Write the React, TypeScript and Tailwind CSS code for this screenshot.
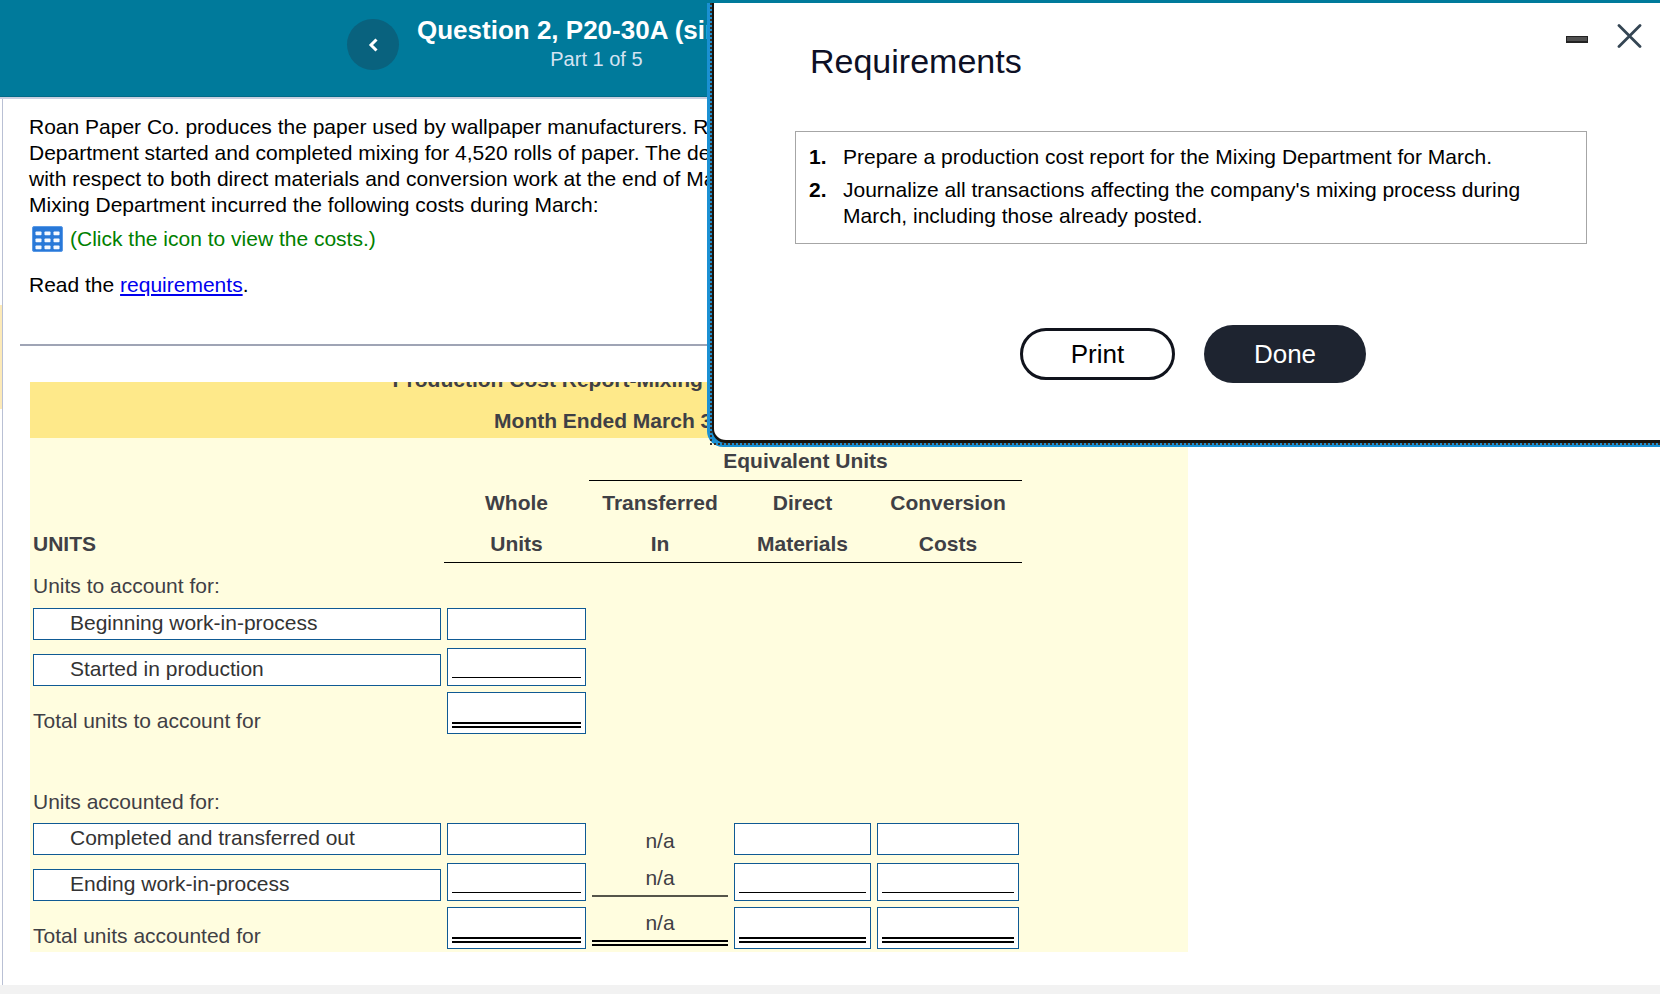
import { useState } from 'react';
import type { ReactNode } from 'react';

type LineStyle = 'none' | 'single' | 'double';

// Answer box, with the accounting rule lines drawn inside it
function AnswerBox({ label, line = 'none' }: { label: string; line?: LineStyle }) {
  const [value, setValue] = useState('');
  const height = line === 'double' ? 'h-[42px]' : line === 'single' ? 'h-[38px]' : 'h-8';

  return (
    <div className={`flex flex-col border border-[#0f5a94] bg-white px-[4px] ${height}`}>
      <input
        aria-label={label}
        value={value}
        onChange={(e) => setValue(e.target.value)}
        className="min-h-0 w-full flex-1 bg-transparent text-center outline-none"
      />
      {line === 'single' && <div className="mb-[7px] border-b border-black" />}
      {line === 'double' && <div className="mb-[5px] h-[6px] border-y-2 border-black" />}
    </div>
  );
}

// Row title the student picks
function AccountBox({ label, name }: { label: string; name: string }) {
  const [value, setValue] = useState(name);
  return (
    <input
      aria-label={label}
      value={value}
      onChange={(e) => setValue(e.target.value)}
      className="block h-8 w-full border border-[#0f5a94] bg-white pb-[2px] pl-[36px] text-[#333] outline-none"
    />
  );
}

function NotApplicable({ line = 'none' }: { line?: LineStyle }) {
  return (
    <div>
      <div className="pb-[4px] leading-[26px]">n/a</div>
      {line === 'single' && <div className="mb-[4px] border-b-2 border-[#55554a]" />}
      {line === 'double' && <div className="mb-[3px] h-[6px] border-y-2 border-black" />}
    </div>
  );
}

function HeadCell({ children }: { children: ReactNode }) {
  return <th className="h-[41px] pt-[5px] text-center">{children}</th>;
}

function UnitCell({ children }: { children: ReactNode }) {
  return <th className="border-b border-black pt-[5px] text-center">{children}</th>;
}

function CostReport() {
  return (
    <table className="-mt-[25px] w-full table-fixed border-collapse bg-[#fffddf] text-left text-[21px] leading-[26px] text-[#3f4045]">
      <colgroup>
        <col className="w-[414px]" />
        <col className="w-[145px]" />
        <col className="w-[142px]" />
        <col className="w-[143px]" />
        <col className="w-[148px]" />
        <col />
      </colgroup>
      <thead>
        <tr className="h-[41px] bg-[#fee98a]">
          <th colSpan={6} className="pt-[5px] text-center">Production Cost Report-Mixing Department</th>
        </tr>
        <tr className="h-10 bg-[#fee98a]">
          <th colSpan={6} className="pt-[5px] text-center">Month Ended March 31</th>
        </tr>
        <tr className="h-[42px]">
          <td colSpan={2} />
          <th colSpan={3} className="border-b border-black pt-[5px] text-center">Equivalent Units</th>
          <td />
        </tr>
        <tr>
          <td />
          <HeadCell>Whole</HeadCell>
          <HeadCell>Transferred</HeadCell>
          <HeadCell>Direct</HeadCell>
          <HeadCell>Conversion</HeadCell>
          <td />
        </tr>
        <tr className="h-[41px]">
          <th className="pl-[3px] pt-[5px]">UNITS</th>
          <UnitCell>Units</UnitCell>
          <UnitCell>In</UnitCell>
          <UnitCell>Materials</UnitCell>
          <UnitCell>Costs</UnitCell>
          <td />
        </tr>
      </thead>
      <tbody>
        <tr className="h-[43px]">
          <td className="pl-[3px] pt-[5px]">Units to account for:</td>
        </tr>
        <tr>
          <td className="p-[3px] align-bottom">
            <AccountBox label="First unit source" name="Beginning work-in-process" />
          </td>
          <td className="p-[3px]"><AnswerBox label="Beginning whole units" /></td>
        </tr>
        <tr className="h-[46px]">
          <td className="p-[3px] align-bottom">
            <AccountBox label="Second unit source" name="Started in production" />
          </td>
          <td className="p-[3px] align-bottom"><AnswerBox label="Started whole units" line="single" /></td>
        </tr>
        <tr>
          <td className="px-[3px] align-bottom leading-8">Total units to account for</td>
          <td className="p-[3px]"><AnswerBox label="Total whole units to account for" line="double" /></td>
        </tr>
        <tr className="h-[41px]">
          <td />
        </tr>
        <tr className="h-[42px]">
          <td className="pl-[3px] pt-[5px]">Units accounted for:</td>
        </tr>
        <tr>
          <td className="p-[3px]">
            <AccountBox label="First unit use" name="Completed and transferred out" />
          </td>
          <td className="p-[3px]"><AnswerBox label="Completed whole units" /></td>
          <td className="px-[3px] text-center align-bottom"><NotApplicable /></td>
          <td className="p-[3px]"><AnswerBox label="Completed direct materials" /></td>
          <td className="p-[3px]"><AnswerBox label="Completed conversion costs" /></td>
        </tr>
        <tr className="h-[46px]">
          <td className="p-[3px] align-bottom">
            <AccountBox label="Second unit use" name="Ending work-in-process" />
          </td>
          <td className="p-[3px] align-bottom"><AnswerBox label="Ending whole units" line="single" /></td>
          <td className="px-[3px] pb-[3px] text-center align-bottom"><NotApplicable line="single" /></td>
          <td className="p-[3px] align-bottom"><AnswerBox label="Ending direct materials" line="single" /></td>
          <td className="p-[3px] align-bottom"><AnswerBox label="Ending conversion costs" line="single" /></td>
        </tr>
        <tr>
          <td className="px-[3px] align-bottom leading-8">Total units accounted for</td>
          <td className="p-[3px]"><AnswerBox label="Total whole units" line="double" /></td>
          <td className="px-[3px] pb-[3px] text-center align-bottom"><NotApplicable line="double" /></td>
          <td className="p-[3px]"><AnswerBox label="Total direct materials" line="double" /></td>
          <td className="p-[3px]"><AnswerBox label="Total conversion costs" line="double" /></td>
        </tr>
      </tbody>
    </table>
  );
}

function TableIcon() {
  return (
    <svg width="31" height="26" viewBox="0 0 31 26" aria-hidden="true">
      <rect x="0.5" y="0.5" width="30" height="25" rx="1.5" fill="#2878d8" stroke="#5a9ae6" />
      {[5.5, 12.5, 19.5].map((y) =>
        [3.5, 12.5, 21.5].map((x) => (
          <rect key={`${x}-${y}`} x={x} y={y} width="6" height="3.800" rx="0.8" fill="#f4f8ff" />
        ))
      )}
    </svg>
  );
}

function RequirementsDialog({ onClose }: { onClose: () => void }) {
  return (
    <div
      role="dialog"
      aria-labelledby="dialog-title"
      className="absolute left-[707px] right-0 top-[3px] rounded-bl-[16px] bg-[#1b90d3] pb-[4px] pl-[5px]"
    >
      {/* Focus outline */}
      <div className="pointer-events-none absolute bottom-[2px] left-[3px] right-0 top-0 border-b-2 border-l-2 border-dotted border-[#3a3028]" />
      <div className="relative rounded-bl-[14px] border-b-[3px] border-l-2 border-[#15130f] bg-white pb-[57px] pl-[81px] pr-[73px] pt-[38px]">
        <div className="absolute right-[18px] top-[20px] flex items-center gap-[29px]">
          <button aria-label="Minimize" className="flex h-[25px] items-center">
            <span className="mt-[8px] block h-[7px] w-[22px] border border-b-2 border-[#222] bg-[#505050]" />
          </button>
          <button aria-label="Close" onClick={onClose}>
            <svg width="25" height="25" viewBox="0 0 25 25" fill="none" stroke="#344553" strokeWidth="2.8" strokeLinecap="round">
              <path d="M2 2.5l21 21M23 2.5l-21 21" />
            </svg>
          </button>
        </div>

        <h2 id="dialog-title" className="pl-[15px] text-[34px] leading-10 text-[#0d1025]">Requirements</h2>

        <ol className="mt-[50px] flex flex-col gap-[7px] border border-[#a6a6a6] px-[13px] pb-[14px] pt-[12px] text-[21px] leading-[26px] text-black">
          <li className="flex">
            <b className="w-[34px] shrink-0">1.</b>
            <span>Prepare a production cost report for the Mixing Department for March.</span>
          </li>
          <li className="flex">
            <b className="w-[34px] shrink-0">2.</b>
            <span>Journalize all transactions affecting the company's mixing process during March, including those already posted.</span>
          </li>
        </ol>

        <div className="mt-[81px] flex items-center justify-center gap-[29px] pl-[4px] text-[26px]">
          <button className="h-[52px] w-[155px] rounded-full border-3 border-[#10131c] text-black">Print</button>
          <button onClick={onClose} className="h-[58px] w-[162px] rounded-full bg-[#1e2430] text-white">Done</button>
        </div>
      </div>
    </div>
  );
}

export default function App() {
  const [showRequirements, setShowRequirements] = useState(true);

  return (
    <div className="relative flex min-h-screen flex-col overflow-hidden bg-[#f2f2f2] font-['Liberation_Sans',Arial,sans-serif] text-black">
      <header className="flex h-[99px] items-start gap-[18px] border-b-2 border-[#c9cfe0] bg-[#007a9b] pl-[347px] pt-[17px] shadow-[inset_0_-1px_0_#006a88]">
        <button aria-label="Previous question" className="mt-[2px] flex h-[51px] w-[52px] items-center justify-center rounded-full bg-[#09627e]">
          <svg width="10" height="14" viewBox="0 0 10 14" fill="none" stroke="#fff" strokeWidth="3">
            <path d="M8.5 1.5L3 7l5.500 5.500" />
          </svg>
        </button>
        <div className="text-center">
          <h1 className="text-[26px] font-bold leading-[26px] text-white">Question 2, P20-30A (similar)</h1>
          <p className="text-[20px] leading-8 text-[#d5e3f2]">Part 1 of 5</p>
        </div>
      </header>

      <div className="mb-[9px] flex flex-1 bg-white">
        {/* Sliver of the question list */}
        <div className="w-[2px] pt-[206px]">
          <div className="h-[104px] bg-[#fdeab8]" />
        </div>

        <main className="flex-1 border-l border-[#b9c0d4]">
          <div className="whitespace-nowrap pl-[26px] pt-[15px] text-[21px] leading-[26px]">
            <p>
              Roan Paper Co. produces the paper used by wallpaper manufacturers. Roan's
              <br />
              Department started and completed mixing for 4,520 rolls of paper. The department
              <br />
              with respect to both direct materials and conversion work at the end of March. The
              <br />
              Mixing Department incurred the following costs during March:
            </p>
            <button className="mt-[8px] flex items-center gap-[7px] pl-[3px] text-[#008000]">
              <TableIcon />
              (Click the icon to view the costs.)
            </button>
            <p className="mt-[20px]">
              Read the{' '}
              <a
                href="#requirements"
                onClick={() => setShowRequirements(true)}
                className="text-[#0000ee] underline"
              >
                requirements
              </a>
              .
            </p>
          </div>

          <hr className="ml-[17px] mt-[46px] border-t-2 border-[#9fa4b5]" />

          <div className="ml-[27px] mt-[36px] max-w-[1158px] overflow-hidden">
            <CostReport />
          </div>
        </main>
      </div>

      {showRequirements && <RequirementsDialog onClose={() => setShowRequirements(false)} />}
    </div>
  );
}
